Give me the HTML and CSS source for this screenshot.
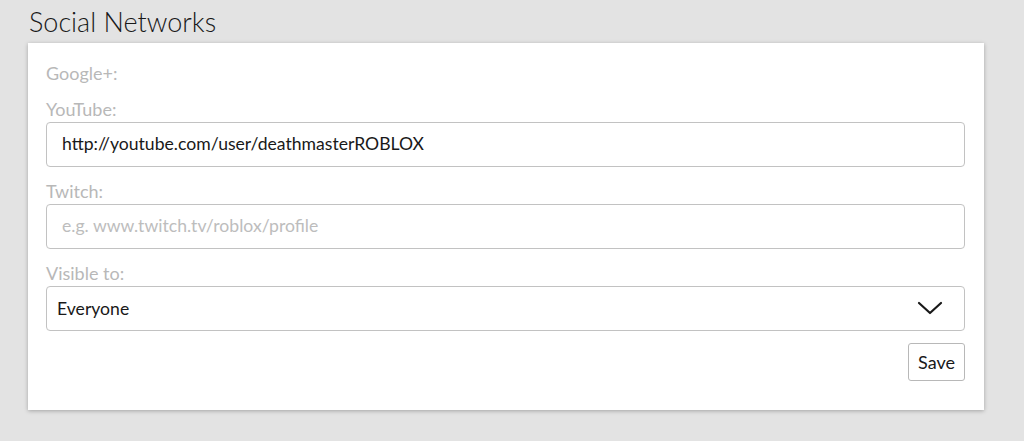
FILE: index.html
```html
<!DOCTYPE html>
<html lang="en">
<head>
<meta charset="utf-8">
<title>Social Networks</title>
<link rel="stylesheet" href="styles.css">
</head>
<body>
<section class="section">
  <h2 class="section-title">Social Networks</h2>
  <div class="card">
    <div class="group">
      <label class="label">Google+:</label>
    </div>
    <div class="group">
      <label class="label" for="yt">YouTube:</label>
      <input class="field" id="yt" type="text" value="http://youtube.com/user/deathmasterROBLOX">
    </div>
    <div class="group">
      <label class="label" for="tw">Twitch:</label>
      <input class="field" id="tw" type="text" placeholder="e.g. www.twitch.tv/roblox/profile">
    </div>
    <div class="group">
      <label class="label" for="vis">Visible to:</label>
      <div class="select-wrap">
        <select class="field select" id="vis">
          <option>Everyone</option>
        </select>
        <svg class="chevron" width="26" height="14" viewBox="0 0 26 14" aria-hidden="true">
          <polyline points="2,2 13,12 24,2" fill="none" stroke="#191919" stroke-width="2.2" stroke-linecap="round" stroke-linejoin="round"/>
        </svg>
      </div>
    </div>
    <div class="actions">
      <button class="btn" type="button">Save</button>
    </div>
  </div>
</section>
</body>
</html>
```

FILE: styles.css
```css
html, body {
  margin: 0;
  padding: 0;
}
body {
  background: #e3e3e3;
  font-family: "Lato", "Liberation Sans", sans-serif;
  color: #191919;
  width: 1024px;
  height: 441px;
  overflow: hidden;
}
.section {
  padding-left: 28px;
  width: 956px;
}
.section-title {
  margin: 0;
  padding-left: 1px;
  font-size: 27px;
  font-weight: 300;
  line-height: 43px;
  height: 43px;
  color: #191919;
}
.card {
  box-sizing: border-box;
  width: 956px;
  background: #fff;
  padding: 18px 19px 29px 18px;
  box-shadow: 0 1px 4px rgba(0, 0, 0, 0.28);
}
.group {
  display: flex;
  flex-direction: column;
  gap: 1px;
  margin-bottom: 12px;
}
.label {
  font-size: 18px;
  line-height: 24px;
  color: #b8b8b8;
}
.field {
  box-sizing: border-box;
  width: 100%;
  height: 45px;
  border: 1px solid #c2c2c2;
  border-radius: 4px;
  padding: 0 15px 2px;
  font-family: inherit;
  font-size: 17.6px;
  color: #191919;
  background: #fff;
  outline: none;
  margin: 0;
}
.field::placeholder {
  color: #bdbdbd;
}
.select-wrap {
  position: relative;
}
.select {
  appearance: none;
  -webkit-appearance: none;
  padding: 0 10px;
}
.chevron {
  position: absolute;
  right: 22px;
  top: 15px;
  pointer-events: none;
}
.actions {
  display: flex;
  justify-content: flex-end;
}
.btn {
  box-sizing: border-box;
  height: 38px;
  width: 57px;
  padding: 0;
  border: 1px solid #b8b8b8;
  border-radius: 3px;
  background: #fff;
  font-family: inherit;
  font-size: 18px;
  color: #191919;
}
```
